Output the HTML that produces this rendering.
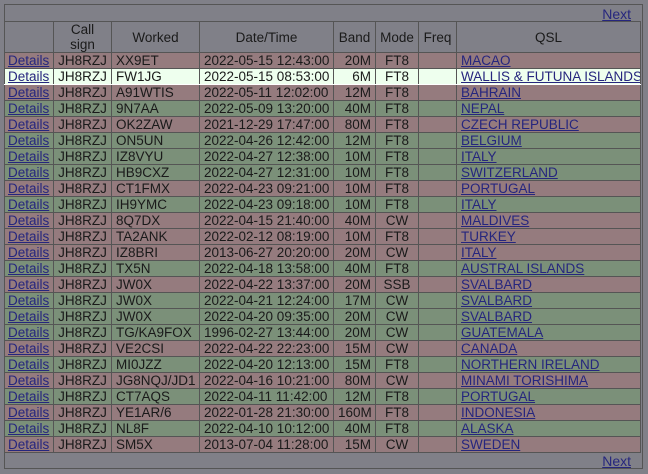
<!DOCTYPE html>
<html><head><meta charset="utf-8"><style>
body{margin:0;width:648px;height:474px;background:#808088;font-family:"Liberation Sans",Arial,sans-serif;font-size:13px;color:#1a1a1a;overflow:hidden;position:relative}
.box{position:absolute;left:4px;top:4px;width:639px;height:465px;border:1px solid #555;box-sizing:border-box}
.next{position:absolute;right:17px;color:#26267e;text-decoration:underline;font-size:14px}
table{position:absolute;left:4px;top:21px;width:636px;border-collapse:collapse;table-layout:fixed}
td,th{border:1px solid #555;padding:0 4px;height:15px;line-height:15px;white-space:nowrap;overflow:hidden;font-weight:normal;font-size:13.5px}
th{height:30px;line-height:15px;text-align:center}
td:first-child{padding:0 3px}
a{color:#26267e;text-decoration:underline}
tr.r td{background:#957b7e}
tr.g td{background:#7b9079}
tr.h td{background:#eeffee;border-top:1px solid #fff;border-bottom:1px solid #fff}
.c{text-align:center}.rt{text-align:right}
</style></head><body>
<div class="box"></div>
<span class="next" style="top:6px">Next</span>
<table>
<colgroup><col style="width:49px"><col style="width:58px"><col style="width:88px"><col style="width:134px"><col style="width:42px"><col style="width:43px"><col style="width:38px"><col style="width:184px"></colgroup>
<tr><th></th><th>Call<br>sign</th><th>Worked</th><th>Date/Time</th><th>Band</th><th>Mode</th><th>Freq</th><th>QSL</th></tr>
<tr class="r"><td><a>Details</a></td><td class="c">JH8RZJ</td><td>XX9ET</td><td>2022-05-15 12:43:00</td><td class="rt">20M</td><td class="c">FT8</td><td></td><td><a>MACAO</a></td></tr>
<tr class="h"><td><a>Details</a></td><td class="c">JH8RZJ</td><td>FW1JG</td><td>2022-05-15 08:53:00</td><td class="rt">6M</td><td class="c">FT8</td><td></td><td><a>WALLIS &amp; FUTUNA ISLANDS</a></td></tr>
<tr class="r"><td><a>Details</a></td><td class="c">JH8RZJ</td><td>A91WTIS</td><td>2022-05-11 12:02:00</td><td class="rt">12M</td><td class="c">FT8</td><td></td><td><a>BAHRAIN</a></td></tr>
<tr class="g"><td><a>Details</a></td><td class="c">JH8RZJ</td><td>9N7AA</td><td>2022-05-09 13:20:00</td><td class="rt">40M</td><td class="c">FT8</td><td></td><td><a>NEPAL</a></td></tr>
<tr class="r"><td><a>Details</a></td><td class="c">JH8RZJ</td><td>OK2ZAW</td><td>2021-12-29 17:47:00</td><td class="rt">80M</td><td class="c">FT8</td><td></td><td><a>CZECH REPUBLIC</a></td></tr>
<tr class="g"><td><a>Details</a></td><td class="c">JH8RZJ</td><td>ON5UN</td><td>2022-04-26 12:42:00</td><td class="rt">12M</td><td class="c">FT8</td><td></td><td><a>BELGIUM</a></td></tr>
<tr class="g"><td><a>Details</a></td><td class="c">JH8RZJ</td><td>IZ8VYU</td><td>2022-04-27 12:38:00</td><td class="rt">10M</td><td class="c">FT8</td><td></td><td><a>ITALY</a></td></tr>
<tr class="g"><td><a>Details</a></td><td class="c">JH8RZJ</td><td>HB9CXZ</td><td>2022-04-27 12:31:00</td><td class="rt">10M</td><td class="c">FT8</td><td></td><td><a>SWITZERLAND</a></td></tr>
<tr class="r"><td><a>Details</a></td><td class="c">JH8RZJ</td><td>CT1FMX</td><td>2022-04-23 09:21:00</td><td class="rt">10M</td><td class="c">FT8</td><td></td><td><a>PORTUGAL</a></td></tr>
<tr class="g"><td><a>Details</a></td><td class="c">JH8RZJ</td><td>IH9YMC</td><td>2022-04-23 09:18:00</td><td class="rt">10M</td><td class="c">FT8</td><td></td><td><a>ITALY</a></td></tr>
<tr class="r"><td><a>Details</a></td><td class="c">JH8RZJ</td><td>8Q7DX</td><td>2022-04-15 21:40:00</td><td class="rt">40M</td><td class="c">CW</td><td></td><td><a>MALDIVES</a></td></tr>
<tr class="r"><td><a>Details</a></td><td class="c">JH8RZJ</td><td>TA2ANK</td><td>2022-02-12 08:19:00</td><td class="rt">10M</td><td class="c">FT8</td><td></td><td><a>TURKEY</a></td></tr>
<tr class="r"><td><a>Details</a></td><td class="c">JH8RZJ</td><td>IZ8BRI</td><td>2013-06-27 20:20:00</td><td class="rt">20M</td><td class="c">CW</td><td></td><td><a>ITALY</a></td></tr>
<tr class="g"><td><a>Details</a></td><td class="c">JH8RZJ</td><td>TX5N</td><td>2022-04-18 13:58:00</td><td class="rt">40M</td><td class="c">FT8</td><td></td><td><a>AUSTRAL ISLANDS</a></td></tr>
<tr class="r"><td><a>Details</a></td><td class="c">JH8RZJ</td><td>JW0X</td><td>2022-04-22 13:37:00</td><td class="rt">20M</td><td class="c">SSB</td><td></td><td><a>SVALBARD</a></td></tr>
<tr class="g"><td><a>Details</a></td><td class="c">JH8RZJ</td><td>JW0X</td><td>2022-04-21 12:24:00</td><td class="rt">17M</td><td class="c">CW</td><td></td><td><a>SVALBARD</a></td></tr>
<tr class="g"><td><a>Details</a></td><td class="c">JH8RZJ</td><td>JW0X</td><td>2022-04-20 09:35:00</td><td class="rt">20M</td><td class="c">CW</td><td></td><td><a>SVALBARD</a></td></tr>
<tr class="g"><td><a>Details</a></td><td class="c">JH8RZJ</td><td>TG/KA9FOX</td><td>1996-02-27 13:44:00</td><td class="rt">20M</td><td class="c">CW</td><td></td><td><a>GUATEMALA</a></td></tr>
<tr class="r"><td><a>Details</a></td><td class="c">JH8RZJ</td><td>VE2CSI</td><td>2022-04-22 22:23:00</td><td class="rt">15M</td><td class="c">CW</td><td></td><td><a>CANADA</a></td></tr>
<tr class="g"><td><a>Details</a></td><td class="c">JH8RZJ</td><td>MI0JZZ</td><td>2022-04-20 12:13:00</td><td class="rt">15M</td><td class="c">FT8</td><td></td><td><a>NORTHERN IRELAND</a></td></tr>
<tr class="r"><td><a>Details</a></td><td class="c">JH8RZJ</td><td>JG8NQJ/JD1</td><td>2022-04-16 10:21:00</td><td class="rt">80M</td><td class="c">CW</td><td></td><td><a>MINAMI TORISHIMA</a></td></tr>
<tr class="g"><td><a>Details</a></td><td class="c">JH8RZJ</td><td>CT7AQS</td><td>2022-04-11 11:42:00</td><td class="rt">12M</td><td class="c">FT8</td><td></td><td><a>PORTUGAL</a></td></tr>
<tr class="r"><td><a>Details</a></td><td class="c">JH8RZJ</td><td>YE1AR/6</td><td>2022-01-28 21:30:00</td><td class="rt">160M</td><td class="c">FT8</td><td></td><td><a>INDONESIA</a></td></tr>
<tr class="g"><td><a>Details</a></td><td class="c">JH8RZJ</td><td>NL8F</td><td>2022-04-10 10:12:00</td><td class="rt">40M</td><td class="c">FT8</td><td></td><td><a>ALASKA</a></td></tr>
<tr class="r"><td><a>Details</a></td><td class="c">JH8RZJ</td><td>SM5X</td><td>2013-07-04 11:28:00</td><td class="rt">15M</td><td class="c">CW</td><td></td><td><a>SWEDEN</a></td></tr>
</table>
<span class="next" style="top:453px">Next</span>
</body></html>
